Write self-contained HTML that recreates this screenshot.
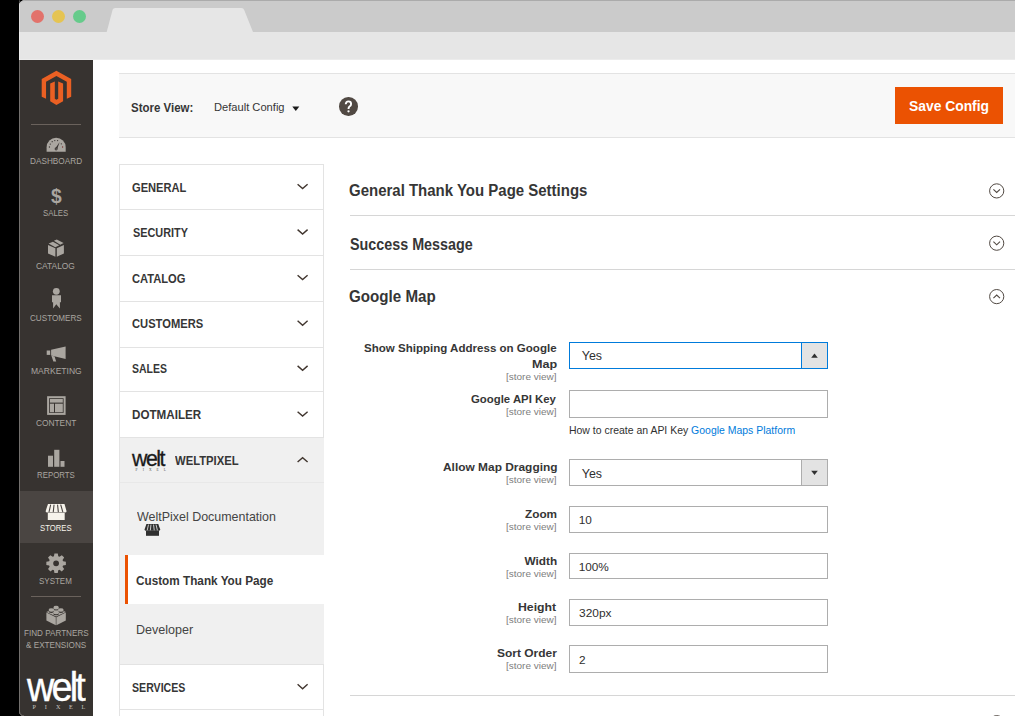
<!DOCTYPE html>
<html><head><meta charset="utf-8"><title>Magento Config</title>
<style>
html,body{margin:0;padding:0;}
body{width:1015px;height:716px;overflow:hidden;background:#000;position:relative;font-family:"Liberation Sans",sans-serif;}
.t{position:absolute;white-space:nowrap;transform-origin:0 0;}
.r{position:absolute;box-sizing:border-box;}
svg{position:absolute;overflow:visible;}
</style></head><body>
<div class="r" style="left:19.00px;top:0.00px;width:1100.00px;height:716.00px;border-radius:6px 6px 0 0;background:#fff;"></div>
<div class="r" style="left:19.00px;top:0.00px;width:1100.00px;height:32.00px;border-radius:6px 0 0 0;background:#cbcbcb;border-top:1px solid #ababab;"></div>
<div class="r" style="left:31.00px;top:10.30px;width:13.20px;height:13.20px;border-radius:50%;background:#e2726b;"></div>
<div class="r" style="left:51.90px;top:10.30px;width:13.20px;height:13.20px;border-radius:50%;background:#e5c452;"></div>
<div class="r" style="left:72.90px;top:10.30px;width:13.20px;height:13.20px;border-radius:50%;background:#66cb8b;"></div>
<svg width="1015" height="730" style="left:0;top:0"><path d="M106.7,32 L112.6,9.8 Q113.2,8 115.2,8 L241.5,8 Q243.4,8 244.1,9.8 L253,32 Z" fill="#e6e6e6"/></svg>
<div class="r" style="left:19.00px;top:32.00px;width:996.00px;height:28.00px;background:#e6e6e6;"></div>
<div class="r" style="left:19.00px;top:59.00px;width:996.00px;height:1.00px;background:#ececec;"></div>
<div class="r" style="left:19.00px;top:60.00px;width:74.00px;height:656.00px;background:#373330;"></div>
<div class="r" style="left:19.00px;top:0.00px;width:1.00px;height:716.00px;background:rgba(255,255,255,0.30);border-radius:6px 0 0 0;"></div>
<svg width="1015" height="730" style="left:0;top:0"><path d="M18,711.5 L19,711.5 A5,5 0 0 0 24,716.5 L24,718 L18,718 Z" fill="#000"/><path d="M19.5,711.5 A4.5,4.5 0 0 0 24,716" fill="none" stroke="#7a7672" stroke-width="1"/></svg>
<svg width="1015" height="730" style="left:0;top:0"><path d="M56.4,70.7 L71.2,79.1 L71.2,96.8 L66.8,98.8 L66.8,81.8 L56.4,76.1 L46.05,81.8 L46.05,98.8 L41.7,96.8 L41.7,79.1 Z" fill="#ea6023"/><path d="M50.2,83.4 L54.8,81.6 L54.8,98.8 L56.4,99.8 L58.2,98.8 L58.2,81.6 L63.1,83.4 L63.1,101.2 L56.4,104.9 L50.2,101.2 Z" fill="#ea6023"/></svg>
<div class="r" style="left:30.60px;top:123.60px;width:50.90px;height:1.00px;background:#6a625c;"></div>
<div class="r" style="left:20.00px;top:491.30px;width:73.00px;height:51.50px;background:#4a4542;"></div>
<div class="t" style="left:29.94px;top:155.72px;font-size:9.9px;line-height:9.9px;font-weight:400;color:#aaa6a0;transform:scaleX(0.8325);">DASHBOARD</div>
<div class="t" style="left:43.29px;top:207.82px;font-size:9.9px;line-height:9.9px;font-weight:400;color:#aaa6a0;transform:scaleX(0.7928);">SALES</div>
<div class="t" style="left:36.48px;top:260.72px;font-size:9.9px;line-height:9.9px;font-weight:400;color:#aaa6a0;transform:scaleX(0.8506);">CATALOG</div>
<div class="t" style="left:30.49px;top:312.92px;font-size:9.9px;line-height:9.9px;font-weight:400;color:#aaa6a0;transform:scaleX(0.8214);">CUSTOMERS</div>
<div class="t" style="left:30.62px;top:365.72px;font-size:9.9px;line-height:9.9px;font-weight:400;color:#aaa6a0;transform:scaleX(0.8643);">MARKETING</div>
<div class="t" style="left:35.78px;top:417.92px;font-size:9.9px;line-height:9.9px;font-weight:400;color:#aaa6a0;transform:scaleX(0.8442);">CONTENT</div>
<div class="t" style="left:36.97px;top:470.22px;font-size:9.9px;line-height:9.9px;font-weight:400;color:#aaa6a0;transform:scaleX(0.7954);">REPORTS</div>
<div class="t" style="left:39.79px;top:522.72px;font-size:9.9px;line-height:9.9px;font-weight:400;color:#f7f3eb;transform:scaleX(0.7796);">STORES</div>
<div class="t" style="left:39.28px;top:575.62px;font-size:9.9px;line-height:9.9px;font-weight:400;color:#aaa6a0;transform:scaleX(0.8083);">SYSTEM</div>
<div class="t" style="left:23.55px;top:628.22px;font-size:9.9px;line-height:9.9px;font-weight:400;color:#aaa6a0;transform:scaleX(0.8226);">FIND PARTNERS</div>
<div class="t" style="left:25.66px;top:639.52px;font-size:9.9px;line-height:9.9px;font-weight:400;color:#aaa6a0;transform:scaleX(0.8248);">&amp; EXTENSIONS</div>
<div class="r" style="left:30.80px;top:595.60px;width:50.70px;height:1.00px;background:#6a625c;"></div>
<svg width="1015" height="730" style="left:0;top:0"><path d="M46.6,151.8 L46.6,147.3 A9.55,9.5 0 0 1 65.7,147.3 L65.7,151.8 Z" fill="#aaa6a0"/><circle cx="49.4" cy="147.0" r="0.65" fill="#373330"/><circle cx="50.3" cy="144.1" r="0.65" fill="#373330"/><circle cx="52.2" cy="141.7" r="0.65" fill="#373330"/><circle cx="54.8" cy="140.6" r="0.65" fill="#373330"/><circle cx="57.6" cy="140.6" r="0.65" fill="#373330"/><circle cx="61.3" cy="143.8" r="0.65" fill="#373330"/><circle cx="62.6" cy="147.0" r="0.65" fill="#7a2f2f"/><path d="M55.2,148.5 L59.7,142.0 L57.1,149.3 Z" fill="#373330"/><circle cx="56.1" cy="149.0" r="1.45" fill="#373330"/><circle cx="56.1" cy="149.0" r="0.55" fill="#aaa6a0"/><path d="M48,245 L55.4,248.2 L55.4,256.8 L48,253.4 Z" fill="#aaa6a0"/><path d="M56.8,248.2 L63.9,245 L63.9,253.4 L56.8,256.8 Z" fill="#aaa6a0"/><path d="M48.6,243.5 L52.9,241.7 L59.3,245.2 L55.3,247.2 Z" fill="#aaa6a0"/><path d="M53.9,240.8 L56.8,239.6 L63.6,243.1 L60.3,244.7 Z" fill="#aaa6a0"/><circle cx="56.3" cy="291.3" r="3.4" fill="#aaa6a0"/><path d="M52,295.2 L61,295.2 L61,302.2 L59.9,302.2 L59.9,308.6 L56.3,304.2 L53.1,308.6 L53.1,302.2 L52,302.2 Z" fill="#aaa6a0"/><path d="M46.7,350.5 L50.2,350.5 L50.2,354.9 L46.7,354.9 Z" fill="#aaa6a0"/><path d="M51.1,349.8 L65.6,346.5 L65.6,358.9 L51.1,355.6 Z" fill="#aaa6a0"/><path d="M51.3,355.6 L54.6,356.4 L56.2,361.5 L53.4,361.5 Z" fill="#aaa6a0"/><rect x="47.1" y="396.2" width="18.5" height="18.7" fill="#aaa6a0"/><rect x="49.1" y="398.2" width="14.5" height="14.7" fill="#373330"/><rect x="49.9" y="399" width="12.9" height="3.6" fill="#aaa6a0"/><rect x="49.9" y="403.7" width="4.1" height="8.5" fill="#aaa6a0"/><rect x="55" y="403.7" width="7.8" height="8.5" fill="#aaa6a0"/><rect x="48" y="455.7" width="5" height="11.1" fill="#aaa6a0"/><rect x="54.2" y="449.8" width="5.2" height="17" fill="#aaa6a0"/><rect x="60.5" y="461" width="4" height="5.8" fill="#aaa6a0"/><rect x="47.8" y="513.0" width="16.9" height="7" fill="#f7f3eb"/><path d="M48,504 L64.5,504 Q65.6,508 66.6,511.2 Q66.4,512.7 64.8,512.6 L47.6,512.6 Q45.8,512.7 45.6,511.2 Q46.6,508 48,504 Z" fill="#f7f3eb"/><path d="M50.6,505.0 L49.1,511.6" stroke="#4a4542" stroke-width="1.1" stroke-linecap="round"/><path d="M54.0,505.0 L53.3,511.6" stroke="#4a4542" stroke-width="1.1" stroke-linecap="round"/><path d="M57.6,505.0 L58.3,511.6" stroke="#4a4542" stroke-width="1.1" stroke-linecap="round"/><path d="M60.8,505.0 L62.7,511.6" stroke="#4a4542" stroke-width="1.1" stroke-linecap="round"/><path d="M53.94,556.33 L54.43,553.54 L57.77,553.54 L58.26,556.33 L59.51,556.84 L61.82,555.22 L64.18,557.58 L62.56,559.89 L63.07,561.14 L65.86,561.63 L65.86,564.97 L63.07,565.46 L62.56,566.71 L64.18,569.02 L61.82,571.38 L59.51,569.76 L58.26,570.27 L57.77,573.06 L54.43,573.06 L53.94,570.27 L52.69,569.76 L50.38,571.38 L48.02,569.02 L49.64,566.71 L49.13,565.46 L46.34,564.97 L46.34,561.63 L49.13,561.14 L49.64,559.89 L48.02,557.58 L50.38,555.22 L52.69,556.84 Z M59.0,563.3 A2.9,2.9 0 1 0 53.2,563.3 A2.9,2.9 0 1 0 59.0,563.3 Z" fill="#aaa6a0" fill-rule="evenodd"/><path d="M46.4,612.6 L55.8,617.2 L55.8,625.2 L46.4,620.6 Z" fill="#aaa6a0"/><path d="M56.4,617.2 L65.8,612.6 L65.8,620.6 L56.4,625.2 Z" fill="#aaa6a0"/><path d="M46.4,611.9 L56.1,607.4 L65.8,611.9 L56.1,616.5 Z" fill="#aaa6a0"/><ellipse cx="56.1" cy="609.3" rx="2.7" ry="1.35" fill="#373330"/><ellipse cx="56.1" cy="608.3" rx="2.5" ry="1.25" fill="#aaa6a0"/><rect x="53.6" y="607.0999999999999" width="5" height="1.2" fill="#aaa6a0"/><ellipse cx="56.1" cy="607.0999999999999" rx="2.5" ry="1.25" fill="#aaa6a0"/><ellipse cx="51.3" cy="611.6" rx="2.7" ry="1.35" fill="#373330"/><ellipse cx="51.3" cy="610.6" rx="2.5" ry="1.25" fill="#aaa6a0"/><rect x="48.8" y="609.4" width="5" height="1.2" fill="#aaa6a0"/><ellipse cx="51.3" cy="609.4" rx="2.5" ry="1.25" fill="#aaa6a0"/><ellipse cx="60.9" cy="611.6" rx="2.7" ry="1.35" fill="#373330"/><ellipse cx="60.9" cy="610.6" rx="2.5" ry="1.25" fill="#aaa6a0"/><rect x="58.4" y="609.4" width="5" height="1.2" fill="#aaa6a0"/><ellipse cx="60.9" cy="609.4" rx="2.5" ry="1.25" fill="#aaa6a0"/><ellipse cx="56.1" cy="613.9" rx="2.7" ry="1.35" fill="#373330"/><ellipse cx="56.1" cy="612.9" rx="2.5" ry="1.25" fill="#aaa6a0"/><rect x="53.6" y="611.6999999999999" width="5" height="1.2" fill="#aaa6a0"/><ellipse cx="56.1" cy="611.6999999999999" rx="2.5" ry="1.25" fill="#aaa6a0"/></svg>
<div class="t" style="left:50.51px;top:186.35px;font-size:20.5px;line-height:20.5px;font-weight:700;color:#aaa6a0;transform:scaleX(0.9395);">$</div>
<div class="t" style="left:26.88px;top:667.22px;font-size:40.5px;line-height:40.5px;font-weight:400;color:#ffffff;transform:scaleX(0.9321);letter-spacing:-3px;-webkit-text-stroke:0.4px #ffffff;">welt</div>
<svg width="1015" height="730" style="left:0;top:0"><text x="34.2" y="708.9" text-anchor="middle" font-family="Liberation Serif" font-size="6.2" fill="#c9c5c0">P</text><text x="45.7" y="708.9" text-anchor="middle" font-family="Liberation Serif" font-size="6.2" fill="#c9c5c0">I</text><text x="58.2" y="708.9" text-anchor="middle" font-family="Liberation Serif" font-size="6.2" fill="#c9c5c0">X</text><text x="71" y="708.9" text-anchor="middle" font-family="Liberation Serif" font-size="6.2" fill="#c9c5c0">E</text><text x="83.5" y="708.9" text-anchor="middle" font-family="Liberation Serif" font-size="6.2" fill="#c9c5c0">L</text></svg>
<div class="r" style="left:119.00px;top:73.00px;width:896.00px;height:65.00px;background:#f8f8f8;border-top:1px solid #e3e3e3;border-bottom:1px solid #e3e3e3;"></div>
<div class="t" style="left:131.47px;top:101.74px;font-size:12.0px;line-height:12.0px;font-weight:700;color:#363636;transform:scaleX(0.9565);">Store View:</div>
<div class="t" style="left:213.71px;top:102.25px;font-size:11.4px;line-height:11.4px;font-weight:400;color:#363636;transform:scaleX(0.9775);">Default Config</div>
<svg width="1015" height="730" style="left:0;top:0"><path d="M292.3,106.5 L299.3,106.5 L295.8,111 Z" fill="#1a1a1a"/></svg>
<div class="r" style="left:339.00px;top:97.30px;width:18.60px;height:18.60px;border-radius:50%;background:#514943;"></div>
<svg width="1015" height="730" style="left:0;top:0"><path d="M345.7,104.3 Q345.9,101.4 348.5,101.4 Q351.1,101.4 351.1,103.9 Q351.1,105.5 349.5,106.5 Q348.5,107.2 348.5,109.0" fill="none" stroke="#ffffff" stroke-width="1.9"/><circle cx="348.5" cy="111.3" r="1.15" fill="#ffffff"/></svg>
<div class="r" style="left:895.00px;top:86.80px;width:107.80px;height:37.70px;background:#eb5202;"></div>
<div class="t" style="left:909.02px;top:98.00px;font-size:15.0px;line-height:15.0px;font-weight:700;color:#ffffff;transform:scaleX(0.9231);">Save Config</div>
<div class="r" style="left:119.00px;top:164.20px;width:205.40px;height:551.80px;border:1px solid #e3e3e3;border-bottom:none;background:#fff;"></div>
<div class="t" style="left:132.46px;top:182.53px;font-size:11.9px;line-height:11.9px;font-weight:700;color:#363636;transform:scaleX(0.9346);">GENERAL</div>
<svg width="1015" height="730" style="left:0;top:0"><path d="M297.6,184.20000000000002 L302.6,188.6 L307.6,184.20000000000002" fill="none" stroke="#41362f" stroke-width="1.4"/></svg>
<div class="r" style="left:119.00px;top:209.00px;width:205.40px;height:1.00px;background:#e3e3e3;"></div>
<div class="t" style="left:132.68px;top:227.93px;font-size:11.9px;line-height:11.9px;font-weight:700;color:#363636;transform:scaleX(0.9140);">SECURITY</div>
<svg width="1015" height="730" style="left:0;top:0"><path d="M297.6,229.60000000000002 L302.6,234.0 L307.6,229.60000000000002" fill="none" stroke="#41362f" stroke-width="1.4"/></svg>
<div class="r" style="left:119.00px;top:255.10px;width:205.40px;height:1.00px;background:#e3e3e3;"></div>
<div class="t" style="left:132.45px;top:273.53px;font-size:11.9px;line-height:11.9px;font-weight:700;color:#363636;transform:scaleX(0.9374);">CATALOG</div>
<svg width="1015" height="730" style="left:0;top:0"><path d="M297.6,275.2 L302.6,279.59999999999997 L307.6,275.2" fill="none" stroke="#41362f" stroke-width="1.4"/></svg>
<div class="r" style="left:119.00px;top:301.00px;width:205.40px;height:1.00px;background:#e3e3e3;"></div>
<div class="t" style="left:132.45px;top:319.13px;font-size:11.9px;line-height:11.9px;font-weight:700;color:#363636;transform:scaleX(0.9399);">CUSTOMERS</div>
<svg width="1015" height="730" style="left:0;top:0"><path d="M297.6,320.8 L302.6,325.2 L307.6,320.8" fill="none" stroke="#41362f" stroke-width="1.4"/></svg>
<div class="r" style="left:119.00px;top:346.50px;width:205.40px;height:1.00px;background:#e3e3e3;"></div>
<div class="t" style="left:132.49px;top:364.23px;font-size:11.9px;line-height:11.9px;font-weight:700;color:#363636;transform:scaleX(0.8796);">SALES</div>
<svg width="1015" height="730" style="left:0;top:0"><path d="M297.6,365.90000000000003 L302.6,370.3 L307.6,365.90000000000003" fill="none" stroke="#41362f" stroke-width="1.4"/></svg>
<div class="r" style="left:119.00px;top:391.20px;width:205.40px;height:1.00px;background:#e3e3e3;"></div>
<div class="t" style="left:132.20px;top:410.03px;font-size:11.9px;line-height:11.9px;font-weight:700;color:#363636;transform:scaleX(0.9789);">DOTMAILER</div>
<svg width="1015" height="730" style="left:0;top:0"><path d="M297.6,411.7 L302.6,416.09999999999997 L307.6,411.7" fill="none" stroke="#41362f" stroke-width="1.4"/></svg>
<div class="r" style="left:120.00px;top:437.30px;width:204.40px;height:226.70px;background:#f0f0f0;"></div>
<div class="r" style="left:119.00px;top:436.80px;width:205.40px;height:1.00px;background:#e3e3e3;"></div>
<div class="r" style="left:120.00px;top:482.30px;width:204.40px;height:1.00px;background:#e8e8e8;"></div>
<div class="t" style="left:132.41px;top:448.90px;font-size:21.5px;line-height:21.5px;font-weight:400;color:#1a1a1a;transform:scaleX(0.9913);letter-spacing:-1.5px;-webkit-text-stroke:0.3px #1a1a1a;">welt</div>
<svg width="1015" height="730" style="left:0;top:0"><text x="136.4" y="470.7" text-anchor="middle" font-family="Liberation Serif" font-size="3.6" fill="#555">P</text><text x="143.4" y="470.7" text-anchor="middle" font-family="Liberation Serif" font-size="3.6" fill="#555">I</text><text x="150.2" y="470.7" text-anchor="middle" font-family="Liberation Serif" font-size="3.6" fill="#555">X</text><text x="157.5" y="470.7" text-anchor="middle" font-family="Liberation Serif" font-size="3.6" fill="#555">E</text><text x="164.8" y="470.7" text-anchor="middle" font-family="Liberation Serif" font-size="3.6" fill="#555">L</text></svg>
<div class="t" style="left:174.50px;top:455.93px;font-size:11.9px;line-height:11.9px;font-weight:700;color:#363636;transform:scaleX(0.9483);">WELTPIXEL</div>
<svg width="1015" height="730" style="left:0;top:0"><path d="M297.6,462.0 L302.6,457.6 L307.6,462.0" fill="none" stroke="#41362f" stroke-width="1.4"/></svg>
<div class="t" style="left:136.90px;top:511.20px;font-size:12.4px;line-height:12.4px;font-weight:400;color:#444;transform:scaleX(1.0051);">WeltPixel Documentation</div>
<svg width="1015" height="730" style="left:0;top:0"><rect x="146.0" y="530.6" width="13.0" height="5.2" fill="#303030"/><path d="M146.4,524.1 L158.3,524.1 Q159.2,527 160.3,529.6 Q160.2,530.7 159,530.7 L145.6,530.7 Q144.5,530.7 144.5,529.6 Q145.5,527 146.4,524.1 Z" fill="#303030"/><path d="M148.4,525.0 L147.3,529.9" stroke="#f0f0f0" stroke-width="0.8" stroke-linecap="round"/><path d="M150.9,525.0 L150.4,529.9" stroke="#f0f0f0" stroke-width="0.8" stroke-linecap="round"/><path d="M153.6,525.0 L154.2,529.9" stroke="#f0f0f0" stroke-width="0.8" stroke-linecap="round"/><path d="M156.1,525.0 L157.3,529.9" stroke="#f0f0f0" stroke-width="0.8" stroke-linecap="round"/></svg>
<div class="r" style="left:125.20px;top:555.20px;width:204.80px;height:49.20px;background:#fff;"></div>
<div class="r" style="left:125.20px;top:555.20px;width:2.50px;height:49.20px;background:#eb5202;"></div>
<div class="t" style="left:136.03px;top:575.37px;font-size:12.2px;line-height:12.2px;font-weight:700;color:#363636;transform:scaleX(0.9641);">Custom Thank You Page</div>
<div class="t" style="left:136.30px;top:623.80px;font-size:12.4px;line-height:12.4px;font-weight:400;color:#444;transform:scaleX(1.0114);">Developer</div>
<div class="r" style="left:119.00px;top:663.50px;width:205.40px;height:1.00px;background:#e3e3e3;"></div>
<div class="t" style="left:132.39px;top:682.93px;font-size:11.9px;line-height:11.9px;font-weight:700;color:#363636;transform:scaleX(0.8906);">SERVICES</div>
<svg width="1015" height="730" style="left:0;top:0"><path d="M297.6,684.3 L302.6,688.7 L307.6,684.3" fill="none" stroke="#41362f" stroke-width="1.4"/></svg>
<div class="r" style="left:119.00px;top:708.50px;width:205.40px;height:1.00px;background:#e3e3e3;"></div>
<div class="t" style="left:349.30px;top:183.19px;font-size:15.6px;line-height:15.6px;font-weight:700;color:#363636;transform:scaleX(0.9607);">General Thank You Page Settings</div>
<div class="r" style="left:349.90px;top:215.10px;width:665.10px;height:1.00px;background:#d6d6d6;"></div>
<div class="t" style="left:349.61px;top:236.69px;font-size:15.6px;line-height:15.6px;font-weight:700;color:#363636;transform:scaleX(0.9192);">Success Message</div>
<div class="r" style="left:349.90px;top:268.50px;width:665.10px;height:1.00px;background:#d6d6d6;"></div>
<div class="t" style="left:349.29px;top:288.89px;font-size:15.6px;line-height:15.6px;font-weight:700;color:#363636;transform:scaleX(0.9715);">Google Map</div>
<div class="r" style="left:349.90px;top:694.60px;width:665.10px;height:1.00px;background:#d6d6d6;"></div>
<svg width="1015" height="730" style="left:0;top:0"><circle cx="996.7" cy="190.9" r="7.1" fill="none" stroke="#514943" stroke-width="1"/><path d="M993.4000000000001,189.3 L996.7,192.5 L1000.0,189.3" fill="none" stroke="#514943" stroke-width="1.1"/></svg>
<svg width="1015" height="730" style="left:0;top:0"><circle cx="996.7" cy="243.2" r="7.1" fill="none" stroke="#514943" stroke-width="1"/><path d="M993.4000000000001,241.6 L996.7,244.79999999999998 L1000.0,241.6" fill="none" stroke="#514943" stroke-width="1.1"/></svg>
<svg width="1015" height="730" style="left:0;top:0"><circle cx="996.7" cy="296.6" r="7.1" fill="none" stroke="#514943" stroke-width="1"/><path d="M993.4000000000001,298.20000000000005 L996.7,295.0 L1000.0,298.20000000000005" fill="none" stroke="#514943" stroke-width="1.1"/></svg>
<svg width="1015" height="730" style="left:0;top:0"><circle cx="996.7" cy="722.7" r="7.1" fill="none" stroke="#514943" stroke-width="1"/><path d="M993.4000000000001,721.1 L996.7,724.3000000000001 L1000.0,721.1" fill="none" stroke="#514943" stroke-width="1.1"/></svg>
<div class="t" style="left:363.67px;top:343.01px;font-size:11.8px;line-height:11.8px;font-weight:700;color:#363636;transform:scaleX(0.9783);">Show Shipping Address on Google</div>
<div class="t" style="left:531.74px;top:359.21px;font-size:11.8px;line-height:11.8px;font-weight:700;color:#363636;transform:scaleX(1.0665);">Map</div>
<div class="t" style="left:506.30px;top:373.13px;font-size:9.3px;line-height:9.3px;font-weight:400;color:#808080;transform:scaleX(1.0754);">[store view]</div>
<div class="r" style="left:569.10px;top:341.60px;width:259.30px;height:27.00px;border:1px solid #007bdb;background:#fff;"></div>
<div class="r" style="left:800.60px;top:341.60px;width:27.80px;height:27.00px;border:1px solid #007bdb;background:#e3e3e3;"></div>
<svg width="1015" height="730" style="left:0;top:0"><path d="M811.2,357.8 L814.5,353.6 L817.8,357.8 Z" fill="#303030"/></svg>
<div class="t" style="left:581.75px;top:350.00px;font-size:12.4px;line-height:12.4px;font-weight:400;color:#303030;">Yes</div>
<div class="t" style="left:471.05px;top:393.71px;font-size:11.8px;line-height:11.8px;font-weight:700;color:#363636;transform:scaleX(0.9638);">Google API Key</div>
<div class="t" style="left:506.30px;top:407.73px;font-size:9.3px;line-height:9.3px;font-weight:400;color:#808080;transform:scaleX(1.0754);">[store view]</div>
<div class="r" style="left:569.10px;top:390.10px;width:259.30px;height:28.20px;border:1px solid #adadad;background:#fff;"></div>
<div class="t" style="left:568.66px;top:425.22px;font-size:11.2px;line-height:11.2px;font-weight:400;color:#303030;transform:scaleX(0.9350);">How to create an API Key <span style="color:#007bdb">Google Maps Platform</span></div>
<div class="t" style="left:442.56px;top:462.41px;font-size:11.8px;line-height:11.8px;font-weight:700;color:#363636;transform:scaleX(1.0102);">Allow Map Dragging</div>
<div class="t" style="left:506.30px;top:476.23px;font-size:9.3px;line-height:9.3px;font-weight:400;color:#808080;transform:scaleX(1.0754);">[store view]</div>
<div class="r" style="left:569.10px;top:459.30px;width:259.30px;height:27.10px;border:1px solid #adadad;background:#fff;"></div>
<div class="r" style="left:800.60px;top:459.30px;width:27.80px;height:27.10px;border:1px solid #adadad;background:#e3e3e3;"></div>
<svg width="1015" height="730" style="left:0;top:0"><path d="M811.2,470.8 L814.5,475 L817.8,470.8 Z" fill="#303030"/></svg>
<div class="t" style="left:581.75px;top:467.90px;font-size:12.4px;line-height:12.4px;font-weight:400;color:#303030;">Yes</div>
<div class="t" style="left:524.98px;top:508.91px;font-size:11.8px;line-height:11.8px;font-weight:700;color:#363636;">Zoom</div>
<div class="t" style="left:506.30px;top:523.03px;font-size:9.3px;line-height:9.3px;font-weight:400;color:#808080;transform:scaleX(1.0754);">[store view]</div>
<div class="r" style="left:569.10px;top:505.90px;width:259.30px;height:27.10px;border:1px solid #adadad;background:#fff;"></div>
<div class="t" style="left:578.67px;top:515.16px;font-size:11.8px;line-height:11.8px;font-weight:400;color:#303030;">10</div>
<div class="t" style="left:524.46px;top:555.51px;font-size:11.8px;line-height:11.8px;font-weight:700;color:#363636;">Width</div>
<div class="t" style="left:506.30px;top:569.63px;font-size:9.3px;line-height:9.3px;font-weight:400;color:#808080;transform:scaleX(1.0754);">[store view]</div>
<div class="r" style="left:569.10px;top:552.50px;width:259.30px;height:26.90px;border:1px solid #adadad;background:#fff;"></div>
<div class="t" style="left:578.68px;top:561.66px;font-size:11.8px;line-height:11.8px;font-weight:400;color:#303030;">100%</div>
<div class="t" style="left:518.26px;top:601.91px;font-size:11.8px;line-height:11.8px;font-weight:700;color:#363636;transform:scaleX(1.0399);">Height</div>
<div class="t" style="left:506.30px;top:616.03px;font-size:9.3px;line-height:9.3px;font-weight:400;color:#808080;transform:scaleX(1.0754);">[store view]</div>
<div class="r" style="left:569.10px;top:598.90px;width:259.30px;height:27.50px;border:1px solid #adadad;background:#fff;"></div>
<div class="t" style="left:579.14px;top:608.36px;font-size:11.8px;line-height:11.8px;font-weight:400;color:#303030;transform:scaleX(1.0102);">320px</div>
<div class="t" style="left:496.66px;top:648.31px;font-size:11.8px;line-height:11.8px;font-weight:700;color:#363636;transform:scaleX(1.0142);">Sort Order</div>
<div class="t" style="left:506.30px;top:662.43px;font-size:9.3px;line-height:9.3px;font-weight:400;color:#808080;transform:scaleX(1.0754);">[store view]</div>
<div class="r" style="left:569.10px;top:645.30px;width:259.30px;height:27.50px;border:1px solid #adadad;background:#fff;"></div>
<div class="t" style="left:578.91px;top:654.76px;font-size:11.8px;line-height:11.8px;font-weight:400;color:#303030;">2</div>
</body></html>
